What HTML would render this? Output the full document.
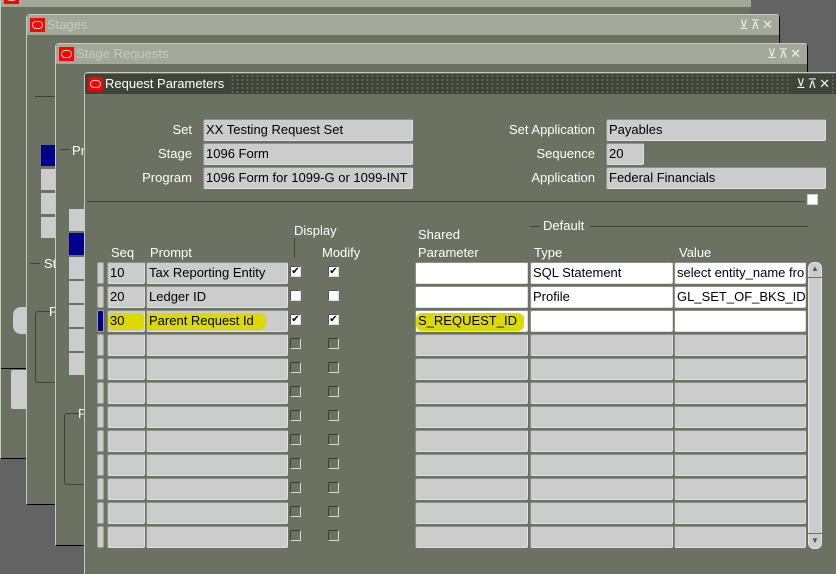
<!DOCTYPE html>
<html style="overflow:hidden;width:836px;height:574px"><head><style>
*{box-sizing:border-box;margin:0;padding:0}
body{width:836px;height:574px;background:#636363;position:relative;overflow:hidden;font-family:"Liberation Sans",sans-serif;font-size:13px;color:#000}
.a{position:absolute}
.win{position:absolute;background:#6b7262;border-left:1px solid #c8ccc0;border-top:1px solid #c8ccc0;border-radius:4px 4px 0 0}
.tb{position:absolute;left:0;right:0;top:0;height:20px;background:#a3a99a;color:#c8ccc0;font-size:13px;line-height:20px;padding-left:20px}
.logo{position:absolute;left:3px;top:3px;width:15px;height:14px;background:#f00}
.logo:after{content:"";position:absolute;left:2px;top:3px;width:9px;height:6px;border:1.5px solid #fcc;border-radius:5px}
.btns{position:absolute;right:4px;top:0;color:#eee;font-size:13px;letter-spacing:2px}
.f{position:absolute;background:#cccccc;border:1px solid #9fa397;border-top-color:#8e9286;border-left-color:#8e9286;border-right-color:#e0e0e0;border-bottom-color:#e0e0e0;border-radius:2px;height:22px;line-height:20px;padding-left:2px;white-space:nowrap;overflow:hidden}
.w{background:#fff}
.l{position:absolute;color:#fff;text-align:right;line-height:14px}
.h{position:absolute;color:#fff;line-height:14px}
.cb{position:absolute;width:11px;height:11px;background:#fff;border:1px solid #555;border-right-color:#ddd;border-bottom-color:#ddd;font-size:10px;line-height:9px;text-align:center}
.ce{position:absolute;width:11px;height:11px;border:1px solid #3c4036;border-right-color:#d8dad0;border-bottom-color:#d8dad0}
.ri{position:absolute;left:97px;width:7px;height:22px;background:#cccccc;border-radius:2px;border:1px solid #9fa397}
.y{background:#dada00}
</style></head><body>

<!-- Request Set window -->
<div class="win" style="left:0;top:-14px;width:751px;height:473px;border-bottom:1px solid #000">
 <div class="tb" style="height:20px"><div class="logo"></div></div>
 <div class="a" style="left:12px;top:320px;width:20px;height:27px;background:#ccc;border-radius:8px 0 0 8px"></div>
 <div class="a" style="left:0;top:381px;width:26px;height:1px;background:#000"></div>
 <div class="a" style="left:10px;top:383px;width:20px;height:39px;background:#ccc;border-radius:2px"></div>
</div>

<!-- Stages -->
<div class="win" style="left:26px;top:14px;width:754px;height:491px;border-bottom:1px solid #000;border-right:1px solid #000">
 <div class="tb">Stages<div class="logo"></div><div class="btns">⊻⊼✕</div></div>
 <div class="a" style="left:8px;top:81px;width:30px;height:1px;background:#3f4438"></div>
 <div class="a" style="left:14px;top:130px;width:20px;height:21px;background:#00008b"></div>
 <div class="a" style="left:14px;top:154px;width:20px;height:21px;background:#ccc"></div>
 <div class="a" style="left:14px;top:178px;width:20px;height:21px;background:#ccc"></div>
 <div class="a" style="left:14px;top:202px;width:20px;height:21px;background:#ccc"></div>
 <div class="a" style="left:3px;top:248px;width:10px;height:1px;background:#3f4438"></div>
 <div class="h" style="left:17px;top:242px">St</div>
 <div class="a" style="left:8px;top:296px;width:20px;height:72px;border:1px solid #3f4438;border-right:none;border-radius:3px 0 0 3px"></div>
 <div class="h" style="left:22px;top:290px">F</div>
</div>

<!-- Stage Requests -->
<div class="win" style="left:55px;top:43px;width:753px;height:503px;border-bottom:1px solid #000;border-right:1px solid #000">
 <div class="tb">Stage Requests<div class="logo"></div><div class="btns">⊻⊼✕</div></div>
 <div class="h" style="left:16px;top:100px">Pr</div>
 <div class="a" style="left:4px;top:105px;width:10px;height:1px;background:#3f4438"></div>
 <div class="a" style="left:31px;top:157px;width:30px;height:1px;background:#3f4438"></div>
 <div class="a" style="left:13px;top:165px;width:20px;height:22px;background:#ccc"></div>
 <div class="a" style="left:13px;top:189px;width:20px;height:22px;background:#00008b"></div>
 <div class="a" style="left:13px;top:213px;width:20px;height:22px;background:#ccc"></div>
 <div class="a" style="left:13px;top:237px;width:20px;height:22px;background:#ccc"></div>
 <div class="a" style="left:13px;top:261px;width:20px;height:22px;background:#ccc"></div>
 <div class="a" style="left:13px;top:285px;width:20px;height:22px;background:#ccc"></div>
 <div class="a" style="left:13px;top:309px;width:20px;height:22px;background:#ccc"></div>
 <div class="a" style="left:8px;top:369px;width:20px;height:72px;border:1px solid #3f4438;border-right:none;border-radius:3px 0 0 3px"></div>
 <div class="h" style="left:22px;top:363px">P</div>
</div>

<!-- Request Parameters -->
<div class="win" style="left:84px;top:72px;width:760px;height:502px">
 <div class="tb" style="background:#404438;color:#fff;height:20px;top:1px;padding-left:0;background-image:radial-gradient(#8a8e80 0.7px,transparent 1px);background-size:5px 4px">
  <div class="a" style="left:0;top:0;width:146px;height:20px;background:#404438"></div>
  <span class="a" style="left:20px;top:0">Request Parameters</span>
  <div class="logo"></div>
  <div class="btns" style="right:12px;background:#404438;padding-left:4px">⊻⊼✕</div>
 </div>
</div>

<!-- header fields -->
<div class="l" style="left:100px;top:123px;width:92px">Set</div>
<div class="l" style="left:100px;top:147px;width:92px">Stage</div>
<div class="l" style="left:100px;top:171px;width:92px">Program</div>
<div class="f" style="left:203px;top:119px;width:210px">XX Testing Request Set</div>
<div class="f" style="left:203px;top:143px;width:210px">1096 Form</div>
<div class="f" style="left:203px;top:167px;width:210px">1096 Form for 1099-G or 1099-INT</div>
<div class="l" style="left:460px;top:123px;width:135px">Set Application</div>
<div class="l" style="left:460px;top:147px;width:135px">Sequence</div>
<div class="l" style="left:460px;top:171px;width:135px">Application</div>
<div class="f" style="left:606px;top:119px;width:220px">Payables</div>
<div class="f" style="left:606px;top:143px;width:38px">20</div>
<div class="f" style="left:606px;top:167px;width:220px">Federal Financials</div>
<div class="a" style="left:807px;top:194px;width:11px;height:11px;background:#fff;border:1px solid #ccc"></div>
<div class="a" style="left:87px;top:201px;width:718px;height:1px;background:#3f4438"></div>

<!-- column headers -->
<div class="a" style="left:530px;top:226px;width:10px;height:1px;background:#3f4438"></div>
<div class="h" style="left:543px;top:219px">Default</div>
<div class="a" style="left:590px;top:226px;width:218px;height:1px;background:#3f4438"></div>
<div class="h" style="left:294px;top:224px">Display</div>
<div class="a" style="left:294px;top:238px;width:1px;height:20px;background:#3f4438"></div>
<div class="h" style="left:322px;top:246px">Modify</div>
<div class="h" style="left:111px;top:246px">Seq</div>
<div class="h" style="left:150px;top:246px">Prompt</div>
<div class="h" style="left:418px;top:228px">Shared</div>
<div class="h" style="left:418px;top:246px">Parameter</div>
<div class="h" style="left:534px;top:246px">Type</div>
<div class="h" style="left:679px;top:246px">Value</div>

<!-- rows -->
<div class="ri" style="top:262px"></div>
<div class="f" style="left:107px;top:262px;width:38px">10</div>
<div class="f" style="left:146px;top:262px;width:142px">Tax Reporting Entity</div>
<div class="cb" style="left:290px;top:266px">✔</div><div class="cb" style="left:328px;top:266px">✔</div>
<div class="f w" style="left:415px;top:262px;width:113px"></div>
<div class="f w" style="left:530px;top:262px;width:143px">SQL Statement</div>
<div class="f w" style="left:674px;top:262px;width:132px">select entity_name fro</div>

<div class="ri" style="top:286px"></div>
<div class="f" style="left:107px;top:286px;width:38px">20</div>
<div class="f" style="left:146px;top:286px;width:142px">Ledger ID</div>
<div class="cb" style="left:290px;top:290px"></div><div class="cb" style="left:328px;top:290px"></div>
<div class="f w" style="left:415px;top:286px;width:113px"></div>
<div class="f w" style="left:530px;top:286px;width:143px">Profile</div>
<div class="f w" style="left:674px;top:286px;width:132px">GL_SET_OF_BKS_ID</div>

<div class="ri" style="top:310px;background:#00008b"></div>
<div class="f" style="left:107px;top:310px;width:38px"><span class="a y" style="left:0;top:2px;width:37px;height:17px;border-radius:6px"></span><span style="position:relative">30</span></div>
<div class="f" style="left:146px;top:310px;width:142px"><span class="a y" style="left:-3px;top:2px;width:122px;height:17px;border-radius:6px"></span><span style="position:relative">Parent Request Id</span></div>
<div class="cb" style="left:290px;top:314px">✔</div><div class="cb" style="left:328px;top:314px">✔</div>
<div class="f w" style="left:415px;top:310px;width:113px"><span class="a y" style="left:0;top:2px;width:108px;height:18px;border-radius:6px"></span><span style="position:relative">S_REQUEST_ID</span></div>
<div class="f w" style="left:530px;top:310px;width:143px"></div>
<div class="f w" style="left:674px;top:310px;width:132px"></div>

<div class="ri" style="top:334px"></div><div class="f" style="left:107px;top:334px;width:38px"></div><div class="f" style="left:146px;top:334px;width:142px"></div><div class="ce" style="left:290px;top:338px"></div><div class="ce" style="left:328px;top:338px"></div><div class="f" style="left:415px;top:334px;width:113px"></div><div class="f" style="left:530px;top:334px;width:143px"></div><div class="f" style="left:674px;top:334px;width:132px"></div>
<div class="ri" style="top:358px"></div><div class="f" style="left:107px;top:358px;width:38px"></div><div class="f" style="left:146px;top:358px;width:142px"></div><div class="ce" style="left:290px;top:362px"></div><div class="ce" style="left:328px;top:362px"></div><div class="f" style="left:415px;top:358px;width:113px"></div><div class="f" style="left:530px;top:358px;width:143px"></div><div class="f" style="left:674px;top:358px;width:132px"></div>
<div class="ri" style="top:382px"></div><div class="f" style="left:107px;top:382px;width:38px"></div><div class="f" style="left:146px;top:382px;width:142px"></div><div class="ce" style="left:290px;top:386px"></div><div class="ce" style="left:328px;top:386px"></div><div class="f" style="left:415px;top:382px;width:113px"></div><div class="f" style="left:530px;top:382px;width:143px"></div><div class="f" style="left:674px;top:382px;width:132px"></div>
<div class="ri" style="top:406px"></div><div class="f" style="left:107px;top:406px;width:38px"></div><div class="f" style="left:146px;top:406px;width:142px"></div><div class="ce" style="left:290px;top:410px"></div><div class="ce" style="left:328px;top:410px"></div><div class="f" style="left:415px;top:406px;width:113px"></div><div class="f" style="left:530px;top:406px;width:143px"></div><div class="f" style="left:674px;top:406px;width:132px"></div>
<div class="ri" style="top:430px"></div><div class="f" style="left:107px;top:430px;width:38px"></div><div class="f" style="left:146px;top:430px;width:142px"></div><div class="ce" style="left:290px;top:434px"></div><div class="ce" style="left:328px;top:434px"></div><div class="f" style="left:415px;top:430px;width:113px"></div><div class="f" style="left:530px;top:430px;width:143px"></div><div class="f" style="left:674px;top:430px;width:132px"></div>
<div class="ri" style="top:454px"></div><div class="f" style="left:107px;top:454px;width:38px"></div><div class="f" style="left:146px;top:454px;width:142px"></div><div class="ce" style="left:290px;top:458px"></div><div class="ce" style="left:328px;top:458px"></div><div class="f" style="left:415px;top:454px;width:113px"></div><div class="f" style="left:530px;top:454px;width:143px"></div><div class="f" style="left:674px;top:454px;width:132px"></div>
<div class="ri" style="top:478px"></div><div class="f" style="left:107px;top:478px;width:38px"></div><div class="f" style="left:146px;top:478px;width:142px"></div><div class="ce" style="left:290px;top:482px"></div><div class="ce" style="left:328px;top:482px"></div><div class="f" style="left:415px;top:478px;width:113px"></div><div class="f" style="left:530px;top:478px;width:143px"></div><div class="f" style="left:674px;top:478px;width:132px"></div>
<div class="ri" style="top:502px"></div><div class="f" style="left:107px;top:502px;width:38px"></div><div class="f" style="left:146px;top:502px;width:142px"></div><div class="ce" style="left:290px;top:506px"></div><div class="ce" style="left:328px;top:506px"></div><div class="f" style="left:415px;top:502px;width:113px"></div><div class="f" style="left:530px;top:502px;width:143px"></div><div class="f" style="left:674px;top:502px;width:132px"></div>
<div class="ri" style="top:526px"></div><div class="f" style="left:107px;top:526px;width:38px"></div><div class="f" style="left:146px;top:526px;width:142px"></div><div class="ce" style="left:290px;top:530px"></div><div class="ce" style="left:328px;top:530px"></div><div class="f" style="left:415px;top:526px;width:113px"></div><div class="f" style="left:530px;top:526px;width:143px"></div><div class="f" style="left:674px;top:526px;width:132px"></div>

<!-- scrollbar -->
<div class="a" style="left:808px;top:262px;width:14px;height:287px;background:#cccccc;border:1px solid #e8e8e8;border-radius:6px"></div>
<div class="a" style="left:808px;top:262px;width:14px;height:16px;border-bottom:1px solid #6b7262;font-size:8px;color:#555;text-align:center;line-height:14px">▲</div>
<div class="a" style="left:808px;top:533px;width:14px;height:16px;border-top:1px solid #6b7262;font-size:8px;color:#555;text-align:center;line-height:14px">▼</div>
</body></html>
